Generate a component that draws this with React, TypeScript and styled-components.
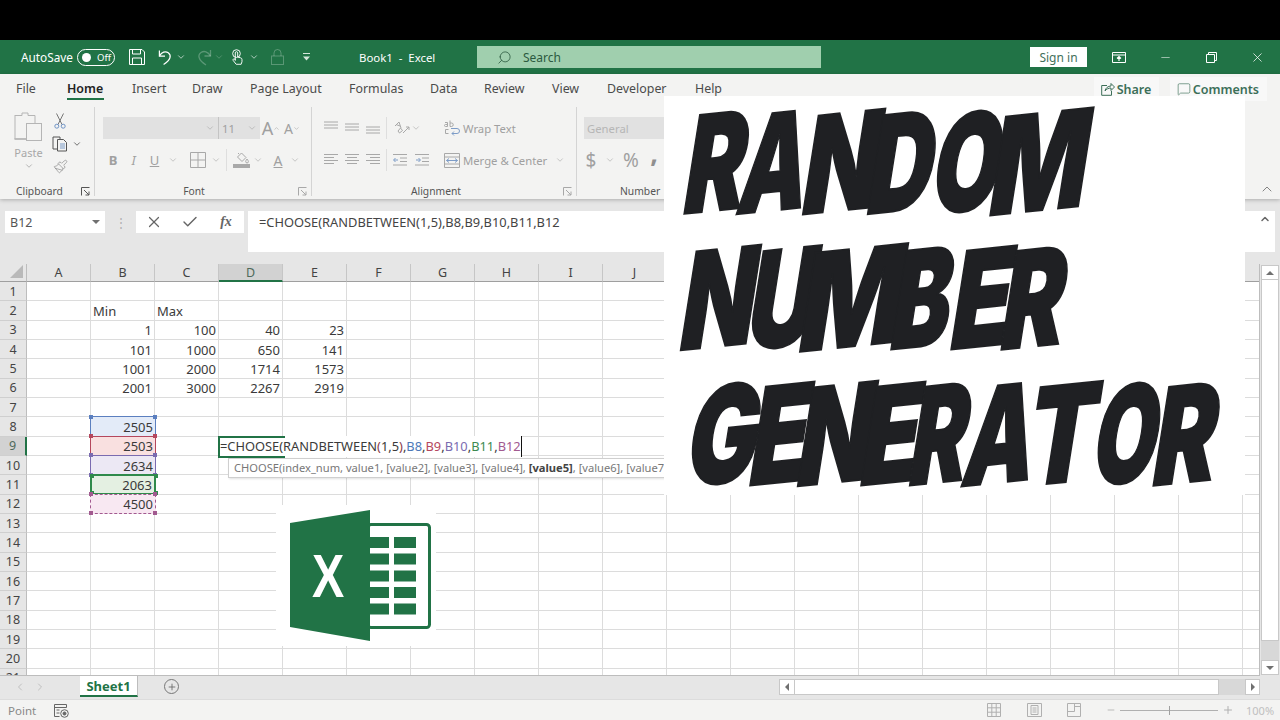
import React from 'react'
import styled, { createGlobalStyle } from 'styled-components'
import {
  Check,
  ChevronDown,
  ChevronLeft,
  ChevronRight,
  ChevronUp,
  MessageSquare,
  Minus,
  Paintbrush,
  Plus,
  Search,
  X,
} from 'lucide-react'

const UI_FONT = `'Noto Sans', 'Open Sans', sans-serif`
const GREEN = '#217346'

const GlobalStyle = createGlobalStyle`
  html, body {
    margin: 0;
    padding: 0;
    background: #000;
  }
  * {
    box-sizing: border-box;
  }
`

const Page = styled.div`
  position: relative;
  width: 1280px;
  height: 720px;
  overflow: hidden;
  display: flex;
  flex-direction: column;
  font-family: ${UI_FONT};
  background: #e6e6e6;
`

const BlackBar = styled.div`
  height: 40px;
  flex: none;
  background: #000;
`

/* title bar */
const TitleBar = styled.div`
  height: 34px;
  flex: none;
  display: flex;
  align-items: center;
  padding-left: 21px;
  background: ${GREEN};
  color: #fff;
  font-size: 11.8px;
`

const Slot = styled.div<{ $w: number; $dim?: boolean }>`
  width: ${(p) => p.$w}px;
  flex: none;
  display: flex;
  align-items: center;
  justify-content: center;
  color: ${(p) => (p.$dim ? 'rgba(255,255,255,0.26)' : 'inherit')};
`

const AutoSave = styled.div`
  width: 51px;
  flex: none;
  white-space: nowrap;
`

const Toggle = styled.div`
  width: 38px;
  height: 17px;
  flex: none;
  margin: 0 14px 0 5px;
  display: flex;
  align-items: center;
  gap: 6px;
  padding-left: 4px;
  border: 1px solid #fff;
  border-radius: 9px;
  font-size: 9.5px;

  &::before {
    content: '';
    width: 9px;
    height: 9px;
    border-radius: 50%;
    background: #fff;
  }
`

const BookName = styled.div`
  width: 77px;
  flex: none;
  margin-left: 31px;
  white-space: nowrap;
  font-size: 11.4px;
`

const SearchBox = styled.div`
  width: 344px;
  height: 22px;
  flex: none;
  margin-left: 41px;
  padding-left: 20px;
  display: flex;
  align-items: center;
  gap: 11px;
  background: #a0cfae;
  color: #2c5a40;
  font-size: 12px;
`

const SignIn = styled.div`
  width: 57px;
  height: 20px;
  flex: none;
  margin-left: auto;
  margin-right: 9px;
  display: flex;
  align-items: center;
  justify-content: center;
  background: #fff;
  color: #42705a;
  font-size: 12px;
`

/* tabs and ribbon */
const Ribbon = styled.div`
  height: 125px;
  flex: none;
  position: relative;
  z-index: 1;
  display: flex;
  flex-direction: column;
  background: #f3f3f2;
  box-shadow: 0 1px 4px rgba(0, 0, 0, 0.25);
`

const TabRow = styled.div`
  height: 29px;
  flex: none;
  display: flex;
  align-items: center;
  gap: 28px;
  padding: 0 13px 0 16px;
  font-size: 12.4px;
  color: #4b4b4b;
`

const Tab = styled.div<{ $active?: boolean; $w: number }>`
  position: relative;
  width: ${(p) => p.$w}px;
  flex: none;
  white-space: nowrap;
  color: ${(p) => (p.$active ? '#222' : 'inherit')};
  font-weight: ${(p) => (p.$active ? 600 : 400)};

  ${(p) =>
    p.$active &&
    `&::after {
      content: '';
      position: absolute;
      left: 0;
      right: 0;
      bottom: -3px;
      height: 2px;
      background: ${GREEN};
    }`}
`

const TabActions = styled.div`
  margin-left: auto;
  display: flex;
  gap: 11px;
  align-self: flex-start;
  padding-top: 3px;
`

const ActionButton = styled.div`
  height: 24px;
  display: flex;
  align-items: center;
  gap: 2px;
  padding: 0 8px 0 6.5px;
  background: #f8f8f8;
  color: #3c6f58;
  font-size: 12.5px;
  font-weight: 600;
`

const RibbonBody = styled.div`
  flex: 1;
  display: flex;
`

const Group = styled.div<{ $w: number; $pad: number }>`
  width: ${(p) => p.$w}px;
  flex: none;
  margin: 4px 0 3px;
  display: flex;
  flex-direction: column;
  padding-left: ${(p) => p.$pad}px;
  border-right: 1px solid #d4d4d4;
  position: relative;
`

const GroupBody = styled.div`
  flex: 1;
  display: flex;
  flex-direction: column;
  gap: 10px;
  padding-top: 10px;
`

const ToolRow = styled.div`
  height: 22px;
  display: flex;
  align-items: center;
  color: #a8a8a8;
  font-size: 11.3px;
`

const GroupLabel = styled.div<{ $endPad?: number; $start?: number }>`
  height: 10px;
  display: flex;
  align-items: center;
  justify-content: ${(p) => (p.$start !== undefined ? 'flex-start' : 'center')};
  padding-left: ${(p) => p.$start ?? 0}px;
  padding-right: ${(p) => p.$endPad ?? 0}px;
  font-size: 10.3px;
  color: #555;
  white-space: nowrap;
`

const Launcher = styled.span`
  position: absolute;
  right: 4px;
  bottom: 0;
  display: flex;
  color: #888;
`

const DisabledField = styled.div<{ $w: number; $divider?: boolean }>`
  width: ${(p) => p.$w}px;
  height: 22px;
  flex: none;
  display: flex;
  align-items: center;
  justify-content: flex-end;
  padding: 0 3px;
  background: #e1e1e1;
  color: #b6b6b6;
  border-left: ${(p) => (p.$divider ? '1px solid #c4c4c4' : 'none')};
  font-size: 11.3px;
`

const NumberField = styled(DisabledField)`
  justify-content: flex-start;
`

const ToolDivider = styled.div`
  width: 1px;
  height: 22px;
  flex: none;
  background: #dedede;
`

const FaintText = styled.span<{ $bold?: boolean; $italic?: boolean; $under?: boolean; $size?: number }>`
  color: #a0a0a0;
  font-size: ${(p) => p.$size ?? 11.3}px;
  font-weight: ${(p) => (p.$bold ? 700 : 400)};
  font-style: ${(p) => (p.$italic ? 'italic' : 'normal')};
  text-decoration: ${(p) => (p.$under ? 'underline' : 'none')};
  white-space: nowrap;
`

const SizeValue = styled(FaintText)`
  margin-right: auto;
`

const ToolLabel = styled(FaintText)<{ $w?: number }>`
  margin-left: 3px;
  width: ${(p) => (p.$w ? `${p.$w}px` : 'auto')};
`

const CommaMark = styled(FaintText)`
  margin-bottom: 14px;
  line-height: 14px;
  color: #8f8f8f;
`

const ClipBody = styled.div`
  flex: 1;
  display: flex;
`

const PasteColumn = styled.div`
  width: 29px;
  flex: none;
  display: flex;
  flex-direction: column;
  align-items: center;
  padding-top: 5px;
  color: #a8a8a8;
  font-size: 11px;
`

const PasteLabel = styled.span`
  margin-top: 3px;
  line-height: 16px;
`

const ClipTools = styled.div`
  display: flex;
  flex-direction: column;
  align-items: flex-start;
  gap: 7px;
  padding: 6px 0 0 9px;
  color: #8a8a8a;
`

const ClipRow = styled.div<{ $pad?: number }>`
  display: flex;
  align-items: center;
  gap: 4px;
  padding-left: ${(p) => p.$pad ?? 0}px;
`

const Collapse = styled.div`
  margin: 0 5px 2px auto;
  align-self: flex-end;
  display: flex;
  color: #666;
`

/* formula bar */
const FormulaBar = styled.div`
  height: 65px;
  flex: none;
  display: flex;
  align-items: flex-start;
  padding: 12px 5px 0;
  background: #e6e6e6;
  font-size: 12.5px;
  color: #444;
`

const NameBox = styled.div`
  width: 100px;
  height: 22px;
  flex: none;
  display: flex;
  align-items: center;
  justify-content: space-between;
  padding: 0 5px;
  background: #fff;
  color: #555;
`

const Grip = styled.div`
  width: 31px;
  height: 22px;
  flex: none;
  display: flex;
  align-items: center;
  justify-content: center;
  color: #b0b0b0;
  font-size: 12px;
`

const FxBox = styled.div`
  width: 108px;
  height: 22px;
  flex: none;
  display: flex;
  align-items: center;
  background: #fff;
  color: #666;
`

const FxLabel = styled.span`
  font-family: 'Liberation Serif', serif;
  font-style: italic;
  font-weight: 700;
  font-size: 14px;
`

const FormulaInput = styled.div`
  width: 1027px;
  height: 41px;
  flex: none;
  margin-left: 4px;
  display: flex;
  justify-content: space-between;
  padding: 2px 4px 0 11px;
  background: #fff;
  color: #444;
  font-size: 12.85px;
  line-height: 18px;
`

/* sheet */
const SheetRow = styled.div`
  height: 412px;
  flex: none;
  display: flex;
  background: #e6e6e6;
`

const Sheet = styled.div`
  width: 1260px;
  height: 412px;
  flex: none;
  display: grid;
  grid-template-columns: 27px repeat(20, 64px);
  grid-template-rows: 18px;
  grid-auto-rows: 19.33px;
  overflow: hidden;
  background: #fff;
  border-bottom: 1px solid #bdbdbd;
  border-right: 1px solid #bdbdbd;
  font-size: 13px;
  color: #3a3a3a;
`

const Corner = styled.div`
  display: flex;
  align-items: flex-end;
  justify-content: flex-end;
  padding: 0 3px 3px 0;
  background: #e6e6e6;
  border-right: 1px solid #bdbdbd;
  border-bottom: 1px solid #9f9f9f;
`

const CornerMark = styled.div`
  width: 0;
  height: 0;
  border-style: solid;
  border-width: 0 0 13px 13px;
  border-color: transparent transparent #b9b9b9 transparent;
`

const ColHeader = styled.div<{ $active?: boolean }>`
  display: flex;
  align-items: center;
  justify-content: center;
  background: ${(p) => (p.$active ? '#d2d2d2' : '#e6e6e6')};
  border-right: 1px solid #c6c6c6;
  border-bottom: ${(p) => (p.$active ? `2px solid ${GREEN}` : '1px solid #9f9f9f')};
  color: ${(p) => (p.$active ? '#4f6a5b' : '#444')};
  font-size: 12.5px;
`

const RowHeader = styled.div<{ $active?: boolean }>`
  display: flex;
  align-items: center;
  justify-content: center;
  background: ${(p) => (p.$active ? '#d2d2d2' : '#e6e6e6')};
  border-right: ${(p) => (p.$active ? `2px solid ${GREEN}` : '1px solid #bdbdbd')};
  border-bottom: 1px solid #cfcfcf;
  color: ${(p) => (p.$active ? '#4f6a5b' : '#444')};
  font-size: 12.5px;
`

const Cell = styled.div<{ $right?: boolean }>`
  display: flex;
  align-items: center;
  justify-content: ${(p) => (p.$right ? 'flex-end' : 'flex-start')};
  padding: 1px 2px 0 2px;
  border-right: 1px solid #dcdcdc;
  border-bottom: 1px solid #dcdcdc;
  white-space: nowrap;
`

const RefCell = styled(Cell)<{ $c: string; $fill: string; $w?: number; $dash?: boolean }>`
  position: relative;
  z-index: 1;
  margin: -1px -1px 0 -1px;
  background: ${(p) => p.$fill};
  border: ${(p) => p.$w ?? 1.5}px ${(p) => (p.$dash ? 'dashed' : 'solid')} ${(p) => p.$c};

  &::before,
  &::after {
    content: '';
    position: absolute;
    width: 4px;
    height: 4px;
    left: -2.5px;
    top: -2.5px;
    background: ${(p) => p.$c};
    box-shadow: 64px 0 0 ${(p) => p.$c};
  }

  &::after {
    top: auto;
    bottom: -2.5px;
  }
`

const ActiveCell = styled(Cell)`
  position: relative;
  z-index: 3;
  padding: 0;
`

const CellEditor = styled.div`
  position: absolute;
  left: 0;
  top: -1px;
  height: 21px;
  display: flex;
  align-items: center;
  padding: 0 0 0 1px;
  background: #fff;
  color: #3a3a3a;
  font-size: 12.85px;
  white-space: nowrap;
  border-right: 1px solid #111;

  &::before {
    content: '';
    position: absolute;
    left: -1px;
    top: 0;
    bottom: -1px;
    width: 65px;
    border: 2px solid ${GREEN};
    border-right: 0;
    pointer-events: none;
  }
`

const Ref = styled.span<{ $c: string }>`
  color: ${(p) => p.$c};
`

const ArgTip = styled.div`
  position: absolute;
  left: 9px;
  top: 21px;
  width: 445px;
  height: 20px;
  padding-left: 5px;
  overflow: hidden;
  background: #fff;
  border: 1px solid #cfcfcf;
  box-shadow: 1px 1px 2px rgba(0, 0, 0, 0.12);
  color: #777;
  font-size: 11.15px;
  line-height: 18px;
  white-space: nowrap;

  b {
    color: #444;
  }
`

const VScroll = styled.div`
  width: 20px;
  flex: none;
  display: flex;
  flex-direction: column;
  padding: 1px;
  background: #e6e6e6;
`

const ScrollButton = styled.div<{ $w?: number; $h?: number }>`
  width: ${(p) => (p.$w ? `${p.$w}px` : 'auto')};
  height: ${(p) => (p.$h ? `${p.$h}px` : 'auto')};
  flex: none;
  display: flex;
  align-items: center;
  justify-content: center;
  background: #fff;
  border: 1px solid #c8c8c8;
  color: #777;
`

const Arrow = styled.span<{ $dir: 'up' | 'down' | 'left' | 'right' }>`
  width: 0;
  height: 0;
  border-style: solid;
  border-color: transparent;
  ${(p) => p.$dir === 'up' && 'border-width: 0 4px 4px; border-bottom-color: #707070;'}
  ${(p) => p.$dir === 'down' && 'border-width: 4px 4px 0; border-top-color: #707070;'}
  ${(p) => p.$dir === 'left' && 'border-width: 4px 4px 4px 0; border-right-color: #707070;'}
  ${(p) => p.$dir === 'right' && 'border-width: 4px 0 4px 4px; border-left-color: #707070;'}
`

const VThumb = styled.div`
  height: 361px;
  flex: none;
  background: #fff;
  border: 1px solid #c8c8c8;
  border-top: 0;
`

const VTrack = styled.div`
  flex: 1;
  background: #d8d8d8;
`

/* sheet tabs and status */
const SheetTabs = styled.div`
  height: 23px;
  flex: none;
  display: flex;
  align-items: flex-start;
  background: #e6e6e6;
`

const TabNav = styled.div`
  width: 80px;
  height: 22px;
  flex: none;
  display: flex;
  align-items: center;
  gap: 8px;
  padding-left: 14px;
  color: #c0c0c0;
`

const SheetTab = styled.div`
  width: 58px;
  height: 21px;
  flex: none;
  display: flex;
  align-items: center;
  justify-content: center;
  background: #fff;
  border-bottom: 2px solid ${GREEN};
  border-right: 1px solid #bdbdbd;
  color: ${GREEN};
  font-size: 13px;
  font-weight: 700;
`

const AddSheet = styled.div`
  width: 15px;
  height: 15px;
  flex: none;
  margin: 3px 0 0 26px;
  display: flex;
  align-items: center;
  justify-content: center;
  border: 1px solid #777;
  border-radius: 50%;
  color: #666;
`

const HScroll = styled.div`
  margin-left: auto;
  margin-right: 20px;
  margin-top: 3px;
  width: 481px;
  height: 16px;
  flex: none;
  display: flex;
`

const HThumb = styled.div`
  width: 424px;
  flex: none;
  background: #fff;
  border: 1px solid #c8c8c8;
  border-left: 0;
`

const HTrack = styled.div`
  flex: 1;
  background: #d8d8d8;
`

const StatusBar = styled.div`
  height: 21px;
  flex: none;
  display: flex;
  align-items: center;
  padding: 0 8px;
  background: #f3f3f2;
  border-top: 1px solid #dcdcdc;
  color: #888;
  font-size: 11.5px;
`

const PointLabel = styled.span`
  width: 46px;
  flex: none;
`

const StatusRight = styled.div`
  margin-left: auto;
  display: flex;
  align-items: center;
  color: #b0b0b0;
`

const ViewIcon = styled.span`
  width: 40px;
  display: flex;
  justify-content: center;
`

const ZoomTrack = styled.div`
  width: 98px;
  height: 1px;
  margin: 0 4px;
  position: relative;
  background: #b0b0b0;

  &::after {
    content: '';
    position: absolute;
    left: 49px;
    top: -4px;
    width: 1px;
    height: 9px;
    background: #a0a0a0;
  }
`

const ZoomMinus = styled.span`
  margin-left: 12px;
  display: flex;
`

const ZoomValue = styled.span`
  width: 26px;
  margin-left: 12px;
  color: #c0c0c0;
  font-size: 11px;
`

/* white thumbnail overlays */
const Poster = styled.div`
  position: absolute;
  left: 664px;
  top: 96px;
  z-index: 5;
  width: 581px;
  height: 399px;
  display: flex;
  flex-direction: column;
  gap: 24px;
  padding-top: 10px;
  background: #fff;
`

const HeadLine = styled.div`
  height: 112px;
  display: flex;
`

const Letter = styled.span<{ $dx: number; $sx: number }>`
  width: 0;
  height: 112px;
  flex: none;
  margin-left: ${(p) => p.$dx}px;
  display: flex;
  align-items: center;
  justify-content: center;
  font-family: Inter, 'Liberation Sans', Arial, sans-serif;
  font-weight: 900;
  font-size: 136px;
  line-height: 112px;
  color: #1f2023;
  -webkit-text-stroke: 2px #1f2023;
  transform: skewX(-9deg) skewY(-6deg) scaleX(${(p) => p.$sx});
`

const LogoWrap = styled.div`
  position: absolute;
  left: 276px;
  top: 505px;
  z-index: 4;
  width: 160px;
  height: 141px;
  display: flex;
  align-items: center;
  padding-left: 14px;
  background: #fff;
`

/* drawings */
const svgProps = { fill: 'none', stroke: 'currentColor', strokeWidth: 1 }

const FloppyIcon = () => (
  <svg width='16' height='16' viewBox='0 0 16 16' {...svgProps}>
    <path d='M.5.5h12.5l2.5 2.5v12.5H.5z' />
    <path d='M3.5.5v4.5h8V.5M3.5 15.5V9h9v6.5' />
  </svg>
)

const UndoIcon = ({ flip }: { flip?: boolean }) => (
  <svg width='15' height='17' viewBox='0 0 15 17' fill='none' stroke='currentColor' strokeWidth='1.3'>
    <g transform={flip ? 'matrix(-1 0 0 1 15 0)' : undefined}>
      <path d='M1.500 1v6h6' />
      <path d='M1.500 7C4 2.500 8 1.500 11 3.500 14.500 6 14 11 6 16' />
    </g>
  </svg>
)

const TouchIcon = () => (
  <svg width='14' height='18' viewBox='0 0 14 18' fill='none' stroke='currentColor' strokeWidth='1.100'>
    <circle cx='6.400' cy='5' r='4.500' />
    <path d='M5 13V4.200a1.400 1.400 0 012.800 0V9l3.500 1a2 2 0 011.500 2v2.500l-1 3H6L2.500 13a1.300 1.300 0 012-1.600z' />
  </svg>
)

const LockIcon = () => (
  <svg width='13' height='16' viewBox='0 0 13 16' fill='none' stroke='currentColor' strokeWidth='1'>
    <rect x='.5' y='7' width='12' height='8.500' />
    <path d='M3 7V4a3.500 3.500 0 017 0v3' />
  </svg>
)

const ScissorsIcon = () => (
  <svg width='12' height='16' viewBox='0 0 12 16' fill='none' stroke='#777' strokeWidth='1'>
    <path d='M2.500.5l5.500 11M9.500.5L4 11.500' />
    <circle cx='2.800' cy='13.200' r='2' stroke='#6f93c4' />
    <circle cx='9.200' cy='13.200' r='2' stroke='#6f93c4' />
  </svg>
)

const LinesIcon = ({ mode }: { mode: 'left' | 'center' | 'right' }) => {
  const widths = [14, 10, 14, 10]
  return (
    <svg width='14' height='14' viewBox='0 0 14 14' {...svgProps}>
      {widths.map((w, i) => {
        const x = mode === 'right' ? 14 - w : mode === 'center' ? (14 - w) / 2 : 0
        return <path key={i} d={`M${x} ${1.5 + i * 3}h${w}`} />
      })}
    </svg>
  )
}

const VAlignIcon = ({ y }: { y: number }) => (
  <svg width='14' height='14' viewBox='0 0 14 14' {...svgProps}>
    <path d={`M0 ${y}h14M0 ${y + 3}h14M0 ${y + 6}h14`} />
  </svg>
)

const IndentIcon = ({ flip }: { flip?: boolean }) => (
  <svg width='14' height='12' viewBox='0 0 14 12' {...svgProps}>
    <path d='M0 .5h14M7 4h7M7 7.5h7M0 11h14' />
    <path d={flip ? 'M1 6h4M3.5 4L5.5 6 3.5 8' : 'M5 6H1M2.5 4L.5 6l2 2'} stroke='#7d9cc7' />
  </svg>
)

const BordersIcon = () => (
  <svg width='16' height='16' viewBox='0 0 16 16' {...svgProps}>
    <path d='M.5.5h15v15H.5zM8 .5v15M.5 8h15' />
  </svg>
)

const FillIcon = () => (
  <svg width='17' height='16' viewBox='0 0 17 16' {...svgProps}>
    <path d='M8.5 1l4.5 4.5-4 4-4.5-4.5zM6 2l-1-1' />
    <path d='M14 7c1 1.4 1.4 2 1.4 2.6a1.3 1.3 0 01-2.7 0C12.7 9 13 8.4 14 7z' />
    <rect x='0' y='12' width='17' height='4' fill='#a9a9a9' stroke='none' />
  </svg>
)

const OrientIcon = () => (
  <svg width='17' height='16' viewBox='0 0 17 16' {...svgProps}>
    <path d='M2 6l4-4 2 6M3 4.5L7 6M5 11l2.5-3 2 2.5-3 2.5zM10 13L16 7M16 7h-3M16 7v3' />
  </svg>
)

const WrapIcon = () => (
  <svg width='16' height='16' viewBox='0 0 16 16' {...svgProps}>
    <path d='M7 8.500h6a1.800 1.800 0 010 5H8M10 11.500l-2 2 2 2' stroke='#7d9cc7' />
    <path d='M1.500 9.500h3M1.500 9.500v4h3' />
    <path d='M1 2.500h2.500v4H1.500a1 1 0 010-2h2M6 .5v6h1.500a1.500 1.500 0 000-3.500H6' />
  </svg>
)

const MergeIcon = () => (
  <svg width='16' height='15' viewBox='0 0 16 15' {...svgProps}>
    <path d='M.5.500h15v14H.5zM.5 4h15M.5 11h15' />
    <path d='M2.500 7.500h11M5 5.500l-2.500 2 2.500 2M11 5.500l2.500 2-2.500 2' stroke='#7d9cc7' />
  </svg>
)

const PasteIcon = () => (
  <svg width='29' height='30' viewBox='0 0 29 30' {...svgProps} stroke='#b5b5b5'>
    <path d='M.5 3.500H8V1h6v2.500h7V12M12 27H.5z' />
    <path d='M1 4v23h11' />
    <rect x='12.500' y='11.500' width='15' height='17' />
  </svg>
)

const CopyIcon = () => (
  <svg width='16' height='16' viewBox='0 0 16 16' {...svgProps} stroke='#555'>
    <path d='M1 1h7v2M1 1v12h4' />
    <path d='M5.500 3.500h6l3 3v8.500h-9z' />
    <path d='M8 8h5M8 10h5M8 12h5' stroke='#7d9cc7' />
  </svg>
)

const LauncherIcon = ({ dark }: { dark?: boolean }) => (
  <svg width='9' height='9' viewBox='0 0 9 9' fill='none' stroke={dark ? '#555' : '#a8a8a8'}>
    <path d='M.5 8.500V.5h8M3 3l5 5M8 4.500V8H4.500' />
  </svg>
)

const ShareIcon = () => (
  <svg width='14' height='14' viewBox='0 0 14 14' {...svgProps}>
    <path d='M6 3.500H.7v9.800h9.800V9M4 9c.5-3 3-5 6-5V1.500L13.500 5 10 8.500V6C7.500 6 5.500 7 4 9z' />
  </svg>
)

const RibbonDisplayIcon = () => (
  <svg width='14' height='11' viewBox='0 0 14 11' fill='none' stroke='#fff'>
    <path d='M.5.500h13v10H.5zM.5 3h13' strokeWidth='1' />
    <path d='M7 9V4.500M5 6.500l2-2 2 2' strokeWidth='1.200' />
  </svg>
)

const RestoreIcon = () => (
  <svg width='11' height='11' viewBox='0 0 11 11' fill='none' stroke='#fff'>
    <path d='M.5 2.500h8v8h-8zM2.500 2.500v-2h8v8h-2' />
  </svg>
)

const CustomizeIcon = () => (
  <svg width='9' height='8' viewBox='0 0 9 8' fill='#d5e6db'>
    <rect x='1' y='0' width='7' height='1' />
    <path d='M1 3.500h7L4.500 7.500z' />
  </svg>
)

const MacroIcon = () => (
  <svg width='15' height='15' viewBox='0 0 15 15' fill='none' stroke='#666'>
    <path d='M.5 1.500h12v3M.5 1.500v12h5M.5 4.500h12M2.500 7h3M2.500 10h3' />
    <circle cx='10.500' cy='10.500' r='3.800' />
    <circle cx='10.500' cy='10.500' r='1.500' fill='#666' />
  </svg>
)

const GridViewIcon = () => (
  <svg width='14' height='14' viewBox='0 0 14 14' {...svgProps}>
    <path d='M.5.500h13v13H.5zM.5 4.800h13M.5 9.200h13M4.800.5v13M9.200.5v13' />
  </svg>
)

const PageViewIcon = () => (
  <svg width='15' height='14' viewBox='0 0 15 14' {...svgProps}>
    <path d='M.5.500h14v13H.5zM4 2.500h7v9H4zM5.500 5h4M5.500 7h4M5.500 9h4' />
  </svg>
)

const BreakViewIcon = () => (
  <svg width='14' height='14' viewBox='0 0 14 14' {...svgProps}>
    <path d='M.5.500h13v13H.5zM.5 8.500h7v-8M7.500 3.500h6' />
  </svg>
)

const ExcelLogo = () => (
  <svg width='141' height='132' viewBox='0 0 141 132'>
    <rect x='78' y='14.500' width='61.500' height='103' rx='3' fill='#fff' stroke='#217346' strokeWidth='3' />
    {[27, 43.500, 60.500, 77, 93.500].map((y) => (
      <React.Fragment key={y}>
        <rect x='78' y={y} width='21' height='11' fill='#217346' />
        <rect x='104' y={y} width='22' height='11' fill='#217346' />
      </React.Fragment>
    ))}
    <polygon points='0,13 80,0 80,131 0,117' fill='#217346' />
    <text
      transform='translate(38 87) scale(0.78 1)'
      textAnchor='middle'
      fontFamily='Liberation Sans, Arial, sans-serif'
      fontWeight='700'
      fontSize='62'
      fill='#fff'
    >
      X
    </text>
  </svg>
)

/* data */
const COLS = 'ABCDEFGHIJKLMNOPQRST'.split('')

const TABS: [string, number][] = [
  ['File', 23],
  ['Home', 37],
  ['Insert', 32],
  ['Draw', 30],
  ['Page Layout', 71],
  ['Formulas', 53],
  ['Data', 26],
  ['Review', 40],
  ['View', 27],
  ['Developer', 60],
  ['Help', 27],
]

const VALUES: Record<string, { text: string; right?: boolean }> = {
  B2: { text: 'Min' },
  C2: { text: 'Max' },
  B3: { text: '1', right: true },
  C3: { text: '100', right: true },
  D3: { text: '40', right: true },
  E3: { text: '23', right: true },
  B4: { text: '101', right: true },
  C4: { text: '1000', right: true },
  D4: { text: '650', right: true },
  E4: { text: '141', right: true },
  B5: { text: '1001', right: true },
  C5: { text: '2000', right: true },
  D5: { text: '1714', right: true },
  E5: { text: '1573', right: true },
  B6: { text: '2001', right: true },
  C6: { text: '3000', right: true },
  D6: { text: '2267', right: true },
  E6: { text: '2919', right: true },
}

const REFS: Record<string, { text: string; c: string; fill: string; w?: number; dash?: boolean }> = {
  B8: { text: '2505', c: '#5b7fbf', fill: '#e3ebf8' },
  B9: { text: '2503', c: '#b5475d', fill: '#f9e0e0' },
  B10: { text: '2634', c: '#7a6bb0', fill: '#ece8f4' },
  B11: { text: '2063', c: '#2f8a4b', fill: '#e4f0e2', w: 2 },
  B12: { text: '4500', c: '#a25a90', fill: '#f8e8f2', dash: true },
}

// letter, distance of its centre from the previous one, horizontal squeeze
const POSTER: [string, number, number][][] = [
  [
    ['R', 54, 0.66],
    ['A', 58, 0.62],
    ['N', 68, 0.72],
    ['D', 60, 0.66],
    ['O', 66, 0.64],
    ['M', 72, 0.74],
  ],
  [
    ['N', 57, 0.7],
    ['U', 64, 0.68],
    ['M', 69, 0.78],
    ['B', 70, 0.64],
    ['E', 60, 0.7],
    ['R', 52, 0.68],
  ],
  [
    ['G', 62, 0.68],
    ['E', 56, 0.68],
    ['N', 56, 0.7],
    ['E', 55, 0.68],
    ['R', 49, 0.62],
    ['A', 60, 0.64],
    ['T', 62, 0.72],
    ['O', 65, 0.6],
    ['R', 59, 0.68],
  ],
]

const Chev = ({ size = 10, w }: { size?: number; w: number }) => (
  <Slot $w={w}>
    <ChevronDown size={size} strokeWidth={1.5} />
  </Slot>
)

const FontGroup = () => (
  <Group $w={217} $pad={8}>
    <GroupBody>
      <ToolRow>
        <DisabledField $w={115}>
          <ChevronDown size={10} />
        </DisabledField>
        <DisabledField $w={42} $divider>
          <SizeValue>11</SizeValue>
          <ChevronDown size={10} />
        </DisabledField>
        <Slot $w={22}>
          <FaintText $size={18}>A</FaintText>
          <ChevronUp size={7} />
        </Slot>
        <Slot $w={20}>
          <FaintText $size={14}>A</FaintText>
          <ChevronDown size={7} />
        </Slot>
      </ToolRow>
      <ToolRow>
        <Slot $w={20}>
          <FaintText $bold $size={13}>B</FaintText>
        </Slot>
        <Slot $w={21}>
          <FaintText $italic $size={13}>I</FaintText>
        </Slot>
        <Slot $w={21}>
          <FaintText $under $size={13}>U</FaintText>
        </Slot>
        <Chev w={16} />
        <Slot $w={9} />
        <Slot $w={16}>
          <BordersIcon />
        </Slot>
        <Chev w={20} />
        <ToolDivider />
        <Slot $w={6} />
        <Slot $w={17}>
          <FillIcon />
        </Slot>
        <Chev w={16} />
        <Slot $w={4} />
        <Slot $w={16}>
          <FaintText $under $size={14}>A</FaintText>
        </Slot>
        <Chev w={18} />
      </ToolRow>
    </GroupBody>
    <GroupLabel $endPad={26}>Font</GroupLabel>
    <Launcher>
      <LauncherIcon />
    </Launcher>
  </Group>
)

const AlignmentGroup = () => (
  <Group $w={265} $pad={8}>
    <GroupBody>
      <ToolRow>
        <Slot $w={21}><VAlignIcon y={1} /></Slot>
        <Slot $w={21}><VAlignIcon y={3} /></Slot>
        <Slot $w={21}><VAlignIcon y={6} /></Slot>
        <Slot $w={3} />
        <ToolDivider />
        <Slot $w={6} />
        <Slot $w={17}><OrientIcon /></Slot>
        <Chev w={12} />
        <Slot $w={22} />
        <WrapIcon />
        <ToolLabel>Wrap Text</ToolLabel>
      </ToolRow>
      <ToolRow>
        <Slot $w={21}><LinesIcon mode='left' /></Slot>
        <Slot $w={21}><LinesIcon mode='center' /></Slot>
        <Slot $w={21}><LinesIcon mode='right' /></Slot>
        <Slot $w={3} />
        <ToolDivider />
        <Slot $w={6} />
        <Slot $w={14}><IndentIcon /></Slot>
        <Slot $w={8} />
        <Slot $w={14}><IndentIcon flip /></Slot>
        <Slot $w={15} />
        <MergeIcon />
        <ToolLabel $w={84}>Merge &amp; Center</ToolLabel>
        <Chev w={26} />
      </ToolRow>
    </GroupBody>
    <GroupLabel $endPad={24}>Alignment</GroupLabel>
    <Launcher>
      <LauncherIcon />
    </Launcher>
  </Group>
)

const App: React.FC = () => {
  const rows = Array.from({ length: 21 }, (_, i) => i + 1)

  return (
    <Page>
      <GlobalStyle />
      <BlackBar />

      <TitleBar>
        <AutoSave>AutoSave</AutoSave>
        <Toggle>Off</Toggle>
        <Slot $w={16}>
          <FloppyIcon />
        </Slot>
        <Slot $w={13} />
        <Slot $w={14}>
          <UndoIcon />
        </Slot>
        <Chev w={18} />
        <Slot $w={7} />
        <Slot $w={15} $dim>
          <UndoIcon flip />
        </Slot>
        <Slot $w={14} $dim>
          <ChevronDown size={10} />
        </Slot>
        <Slot $w={5} />
        <Slot $w={12}>
          <TouchIcon />
        </Slot>
        <Chev w={22} />
        <Slot $w={6} />
        <Slot $w={13} $dim>
          <LockIcon />
        </Slot>
        <Slot $w={44}>
          <CustomizeIcon />
        </Slot>
        <BookName>Book1&nbsp; -&nbsp; Excel</BookName>
        <SearchBox>
          <Search size={15} strokeWidth={1.3} style={{ transform: 'scaleX(-1)' }} />
          Search
        </SearchBox>
        <SignIn>Sign in</SignIn>
        <Slot $w={46}>
          <RibbonDisplayIcon />
        </Slot>
        <Slot $w={46}>
          <Minus size={13} strokeWidth={1} />
        </Slot>
        <Slot $w={46}>
          <RestoreIcon />
        </Slot>
        <Slot $w={46}>
          <X size={15} strokeWidth={1.2} />
        </Slot>
      </TitleBar>

      <Ribbon>
        <TabRow>
          {TABS.map(([name, w]) => (
            <Tab key={name} $w={w} $active={name === 'Home'}>
              {name}
            </Tab>
          ))}
          <TabActions>
            <ActionButton>
              <ShareIcon />
              Share
            </ActionButton>
            <ActionButton>
              <MessageSquare size={14} strokeWidth={1.1} />
              Comments
            </ActionButton>
          </TabActions>
        </TabRow>
        <RibbonBody>
          <Group $w={95} $pad={14}>
            <ClipBody>
              <PasteColumn>
                <PasteIcon />
                <PasteLabel>Paste</PasteLabel>
                <ChevronDown size={10} />
              </PasteColumn>
              <ClipTools>
                <ClipRow $pad={2}>
                  <ScissorsIcon />
                </ClipRow>
                <ClipRow>
                  <CopyIcon />
                  <ChevronDown size={10} color='#555' />
                </ClipRow>
                <ClipRow $pad={1}>
                  <Paintbrush size={15} strokeWidth={1.1} />
                </ClipRow>
              </ClipTools>
            </ClipBody>
            <GroupLabel $start={2}>Clipboard</GroupLabel>
            <Launcher>
              <LauncherIcon dark />
            </Launcher>
          </Group>
          <FontGroup />
          <AlignmentGroup />
          <Group $w={200} $pad={7}>
            <GroupBody>
              <ToolRow>
                <NumberField $w={90}>General</NumberField>
              </ToolRow>
              <ToolRow>
                <Slot $w={14}>
                  <FaintText $size={19}>$</FaintText>
                </Slot>
                <Chev w={24} />
                <Slot $w={18}>
                  <FaintText $size={19}>%</FaintText>
                </Slot>
                <Slot $w={8} />
                <Slot $w={12}>
                  <CommaMark $bold $size={27}>,</CommaMark>
                </Slot>
              </ToolRow>
            </GroupBody>
            <GroupLabel $start={36}>Number</GroupLabel>
          </Group>
          <Collapse>
            <ChevronUp size={16} strokeWidth={1.2} />
          </Collapse>
        </RibbonBody>
      </Ribbon>

      <FormulaBar>
        <NameBox>
          B12
          <Arrow $dir='down' />
        </NameBox>
        <Grip>⋮</Grip>
        <FxBox>
          <Slot $w={36}>
            <X size={18} strokeWidth={1.6} />
          </Slot>
          <Slot $w={36}>
            <Check size={18} strokeWidth={1.9} />
          </Slot>
          <Slot $w={36}>
            <FxLabel>fx</FxLabel>
          </Slot>
        </FxBox>
        <FormulaInput>
          =CHOOSE(RANDBETWEEN(1,5),B8,B9,B10,B11,B12
          <ChevronUp size={12} strokeWidth={3} color='#666' />
        </FormulaInput>
      </FormulaBar>

      <SheetRow>
        <Sheet>
          <Corner>
            <CornerMark />
          </Corner>
          {COLS.map((c) => (
            <ColHeader key={c} $active={c === 'D'}>
              {c === 'T' ? '' : c}
            </ColHeader>
          ))}
          {rows.map((r) => (
            <React.Fragment key={r}>
              <RowHeader $active={r === 9}>{r}</RowHeader>
              {COLS.map((c) => {
                const id = `${c}${r}`
                const ref = REFS[id]
                if (ref) {
                  return (
                    <RefCell key={id} $right $c={ref.c} $fill={ref.fill} $w={ref.w} $dash={ref.dash}>
                      {ref.text}
                    </RefCell>
                  )
                }
                if (id === 'D9') {
                  return (
                    <ActiveCell key={id}>
                      <CellEditor>
                        =CHOOSE(RANDBETWEEN<Ref $c='#8a3b4a'>(</Ref>1,5<Ref $c='#8a3b4a'>)</Ref>,
                        <Ref $c='#4d79b8'>B8</Ref>,<Ref $c='#b5475d'>B9</Ref>,<Ref $c='#7a6bb0'>B10</Ref>,
                        <Ref $c='#3c8a50'>B11</Ref>,<Ref $c='#a25a90'>B12</Ref>
                      </CellEditor>
                      <ArgTip>
                        CHOOSE(index_num, value1, [value2], [value3], [value4], <b>[value5]</b>, [value6], [value7]
                      </ArgTip>
                    </ActiveCell>
                  )
                }
                const value = VALUES[id]
                return (
                  <Cell key={id} $right={value?.right}>
                    {value?.text}
                  </Cell>
                )
              })}
            </React.Fragment>
          ))}
        </Sheet>
        <VScroll>
          <ScrollButton $h={15}>
            <Arrow $dir='up' />
          </ScrollButton>
          <VThumb />
          <VTrack />
          <ScrollButton $h={15}>
            <Arrow $dir='down' />
          </ScrollButton>
        </VScroll>
      </SheetRow>

      <SheetTabs>
        <TabNav>
          <ChevronLeft size={12} />
          <ChevronRight size={12} />
        </TabNav>
        <SheetTab>Sheet1</SheetTab>
        <AddSheet>
          <Plus size={10} />
        </AddSheet>
        <HScroll>
          <ScrollButton $w={16}>
            <Arrow $dir='left' />
          </ScrollButton>
          <HThumb />
          <HTrack />
          <ScrollButton $w={15}>
            <Arrow $dir='right' />
          </ScrollButton>
        </HScroll>
      </SheetTabs>

      <StatusBar>
        <PointLabel>Point</PointLabel>
        <MacroIcon />
        <StatusRight>
          <ViewIcon>
            <GridViewIcon />
          </ViewIcon>
          <ViewIcon>
            <PageViewIcon />
          </ViewIcon>
          <ViewIcon>
            <BreakViewIcon />
          </ViewIcon>
          <ZoomMinus>
            <Minus size={10} />
          </ZoomMinus>
          <ZoomTrack />
          <Plus size={12} />
          <ZoomValue>100%</ZoomValue>
        </StatusRight>
      </StatusBar>

      <Poster>
        {POSTER.map((line, n) => (
          <HeadLine key={n}>
            {line.map(([ch, dx, sx], i) => (
              <Letter key={i} $dx={dx} $sx={sx}>
                {ch}
              </Letter>
            ))}
          </HeadLine>
        ))}
      </Poster>

      <LogoWrap>
        <ExcelLogo />
      </LogoWrap>
    </Page>
  )
}

export default App
